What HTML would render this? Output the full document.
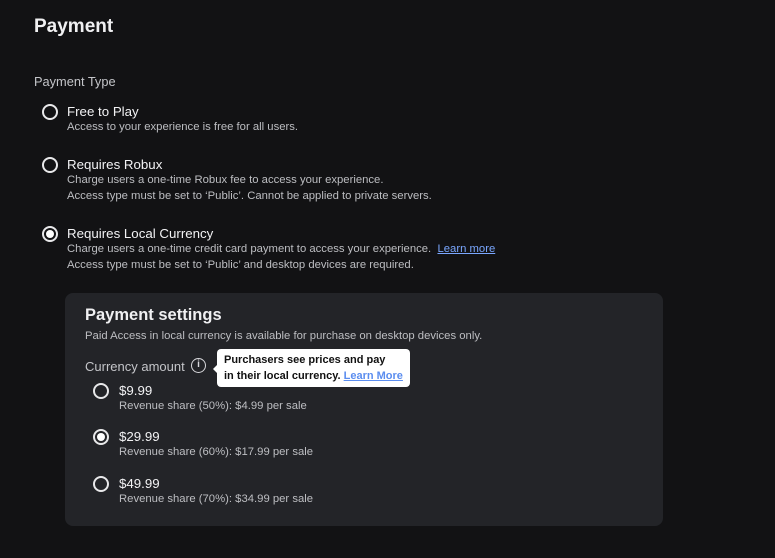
<!DOCTYPE html>
<html><head><style>
*{margin:0;padding:0;box-sizing:border-box}
body{width:775px;height:558px;background:#121214;font-family:"Liberation Sans",sans-serif;position:relative;overflow:hidden;color:#f0f0f2}
.a{position:absolute;white-space:nowrap}
.r{position:absolute;width:16px;height:16px;border:2px solid #e8e8ea;border-radius:50%}
.r.on::after{content:"";position:absolute;left:2px;top:2px;width:8px;height:8px;border-radius:50%;background:#fff}
.l{font-size:13.3px;color:#f2f2f4}
.d{font-size:11.3px;color:#bdbec2}
a{color:#7aa7ff;text-decoration:underline}
</style></head><body>
<div class="a" style="left:34px;top:16px;font-size:19px;font-weight:bold">Payment</div>
<div class="a" style="left:34px;top:74px;font-size:12.8px;color:#c4c5c9">Payment Type</div>

<div class="r" style="left:42px;top:104px"></div>
<div class="a l" style="left:67px;top:104px">Free to Play</div>
<div class="a d" style="left:67px;top:121px">Access to your experience is free for all users.</div>

<div class="r" style="left:42px;top:157px"></div>
<div class="a l" style="left:67px;top:157px">Requires Robux</div>
<div class="a d" style="left:67px;top:174px">Charge users a one-time Robux fee to access your experience.</div>
<div class="a d" style="left:67px;top:190px">Access type must be set to ‘Public’. Cannot be applied to private servers.</div>

<div class="r on" style="left:42px;top:226px"></div>
<div class="a l" style="left:67px;top:226px">Requires Local Currency</div>
<div class="a d" style="left:67px;top:243px">Charge users a one-time credit card payment to access your experience. &nbsp;<a>Learn more</a></div>
<div class="a d" style="left:67px;top:259px">Access type must be set to ‘Public’ and desktop devices are required.</div>

<div class="a" style="left:65px;top:293px;width:598px;height:233px;background:#232428;border-radius:8px"></div>
<div class="a" style="left:85px;top:306px;font-size:16.5px;font-weight:bold">Payment settings</div>
<div class="a d" style="left:85px;top:330px">Paid Access in local currency is available for purchase on desktop devices only.</div>
<div class="a" style="left:85px;top:359px;font-size:13px;color:#c4c5c9">Currency amount</div>
<div class="a" style="left:191px;top:358px;width:15px;height:15px;border:1.5px solid #d8d8dc;border-radius:50%;font-size:10px;font-weight:bold;text-align:center;line-height:12px;color:#d8d8dc">i</div>
<div class="a" style="left:213px;top:364px;width:0;height:0;border-top:5px solid transparent;border-bottom:5px solid transparent;border-right:5px solid #fff"></div>
<div class="a" style="left:217px;top:349px;width:193px;height:38px;background:#fff;border-radius:4px;color:#111;font-size:11px;font-weight:bold;padding:4px 0 0 7px;line-height:15.5px;white-space:normal">Purchasers see prices and pay<br>in their local currency. <a style="color:#5b8def">Learn More</a></div>

<div class="r" style="left:93px;top:383px"></div>
<div class="a l" style="left:119px;top:383px">$9.99</div>
<div class="a d" style="left:119px;top:400px">Revenue share (50%): $4.99 per sale</div>
<div class="r on" style="left:93px;top:429px"></div>
<div class="a l" style="left:119px;top:429px">$29.99</div>
<div class="a d" style="left:119px;top:446px">Revenue share (60%): $17.99 per sale</div>
<div class="r" style="left:93px;top:476px"></div>
<div class="a l" style="left:119px;top:476px">$49.99</div>
<div class="a d" style="left:119px;top:493px">Revenue share (70%): $34.99 per sale</div>
</body></html>
